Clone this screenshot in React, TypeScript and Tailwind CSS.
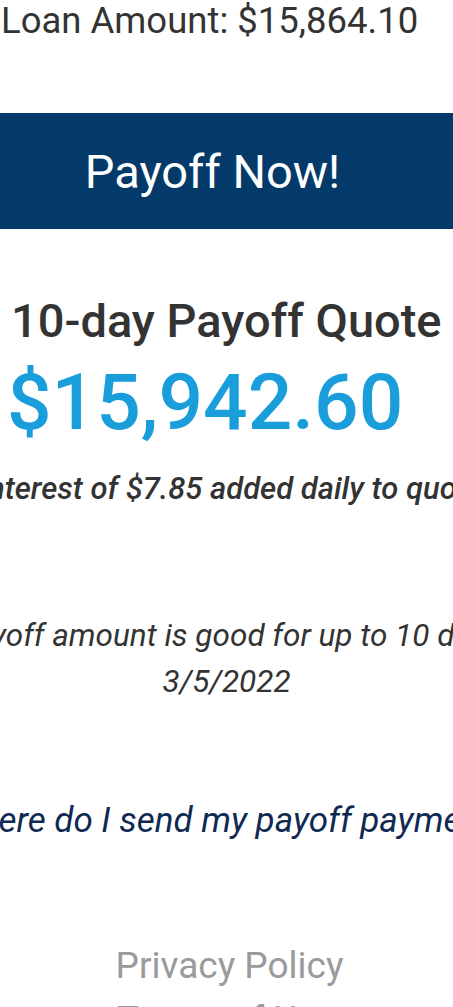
import React from 'react';

const FONT = { fontFamily: 'Roboto, "Noto Sans", sans-serif' };

// centred line that spills past both edges, like the phone view
const SpillLine: React.FC<{ className?: string; children: React.ReactNode }> = ({ className = '', children }) => (
  <div className={`flex justify-center whitespace-nowrap ${className}`}>
    <span className="shrink-0">{children}</span>
  </div>
);

const App: React.FC = () => {
  return (
    <div className="w-[453px] h-[1007px] overflow-hidden bg-white" style={FONT}>
      <p className="h-[42px] pl-[1px] text-[36.5px] leading-[42px] text-[#333333] whitespace-nowrap">
        Loan Amount: $15,864.10
      </p>

      <div className="mt-[71px] h-[116px] bg-[#033a69] flex items-center justify-center pr-[28px]">
        <span className="text-[47px] leading-none text-white">Payoff Now!</span>
      </div>

      <div className="mt-[65px]">
        <h2 className="pl-[11px] text-[47px] leading-[54px] font-medium text-[#333333] whitespace-nowrap">10-day Payoff Quote</h2>
        <p className="mt-[12px] pl-[7px] text-[78.5px] leading-[84px] font-medium text-[#1a9edb] whitespace-nowrap">$15,942.60</p>
      </div>

      <SpillLine className="mt-[25px] pr-[4px] text-[31px] leading-[40px] italic font-medium text-[#333333]">
        *Interest of $7.85 added daily to quote
      </SpillLine>

      <div className="mt-[104px] text-[31.5px] leading-[46px] italic text-[#333333]">
        <SpillLine className="pl-[4px]">Payoff amount is good for up to 10 days</SpillLine>
        <SpillLine>3/5/2022</SpillLine>
      </div>

      <SpillLine className="mt-[94px] pl-[4px] text-[35px] leading-[44px] italic text-[#0f2a52]">
        Where do I send my payoff payment?
      </SpillLine>

      <div className="mt-[100px] text-[37px] leading-[46px] text-[#9a9a9a]">
        <SpillLine className="pl-[6px]">Privacy Policy</SpillLine>
        <SpillLine className="mt-[8px]">Terms of Use</SpillLine>
      </div>
    </div>
  );
};

export default App;
